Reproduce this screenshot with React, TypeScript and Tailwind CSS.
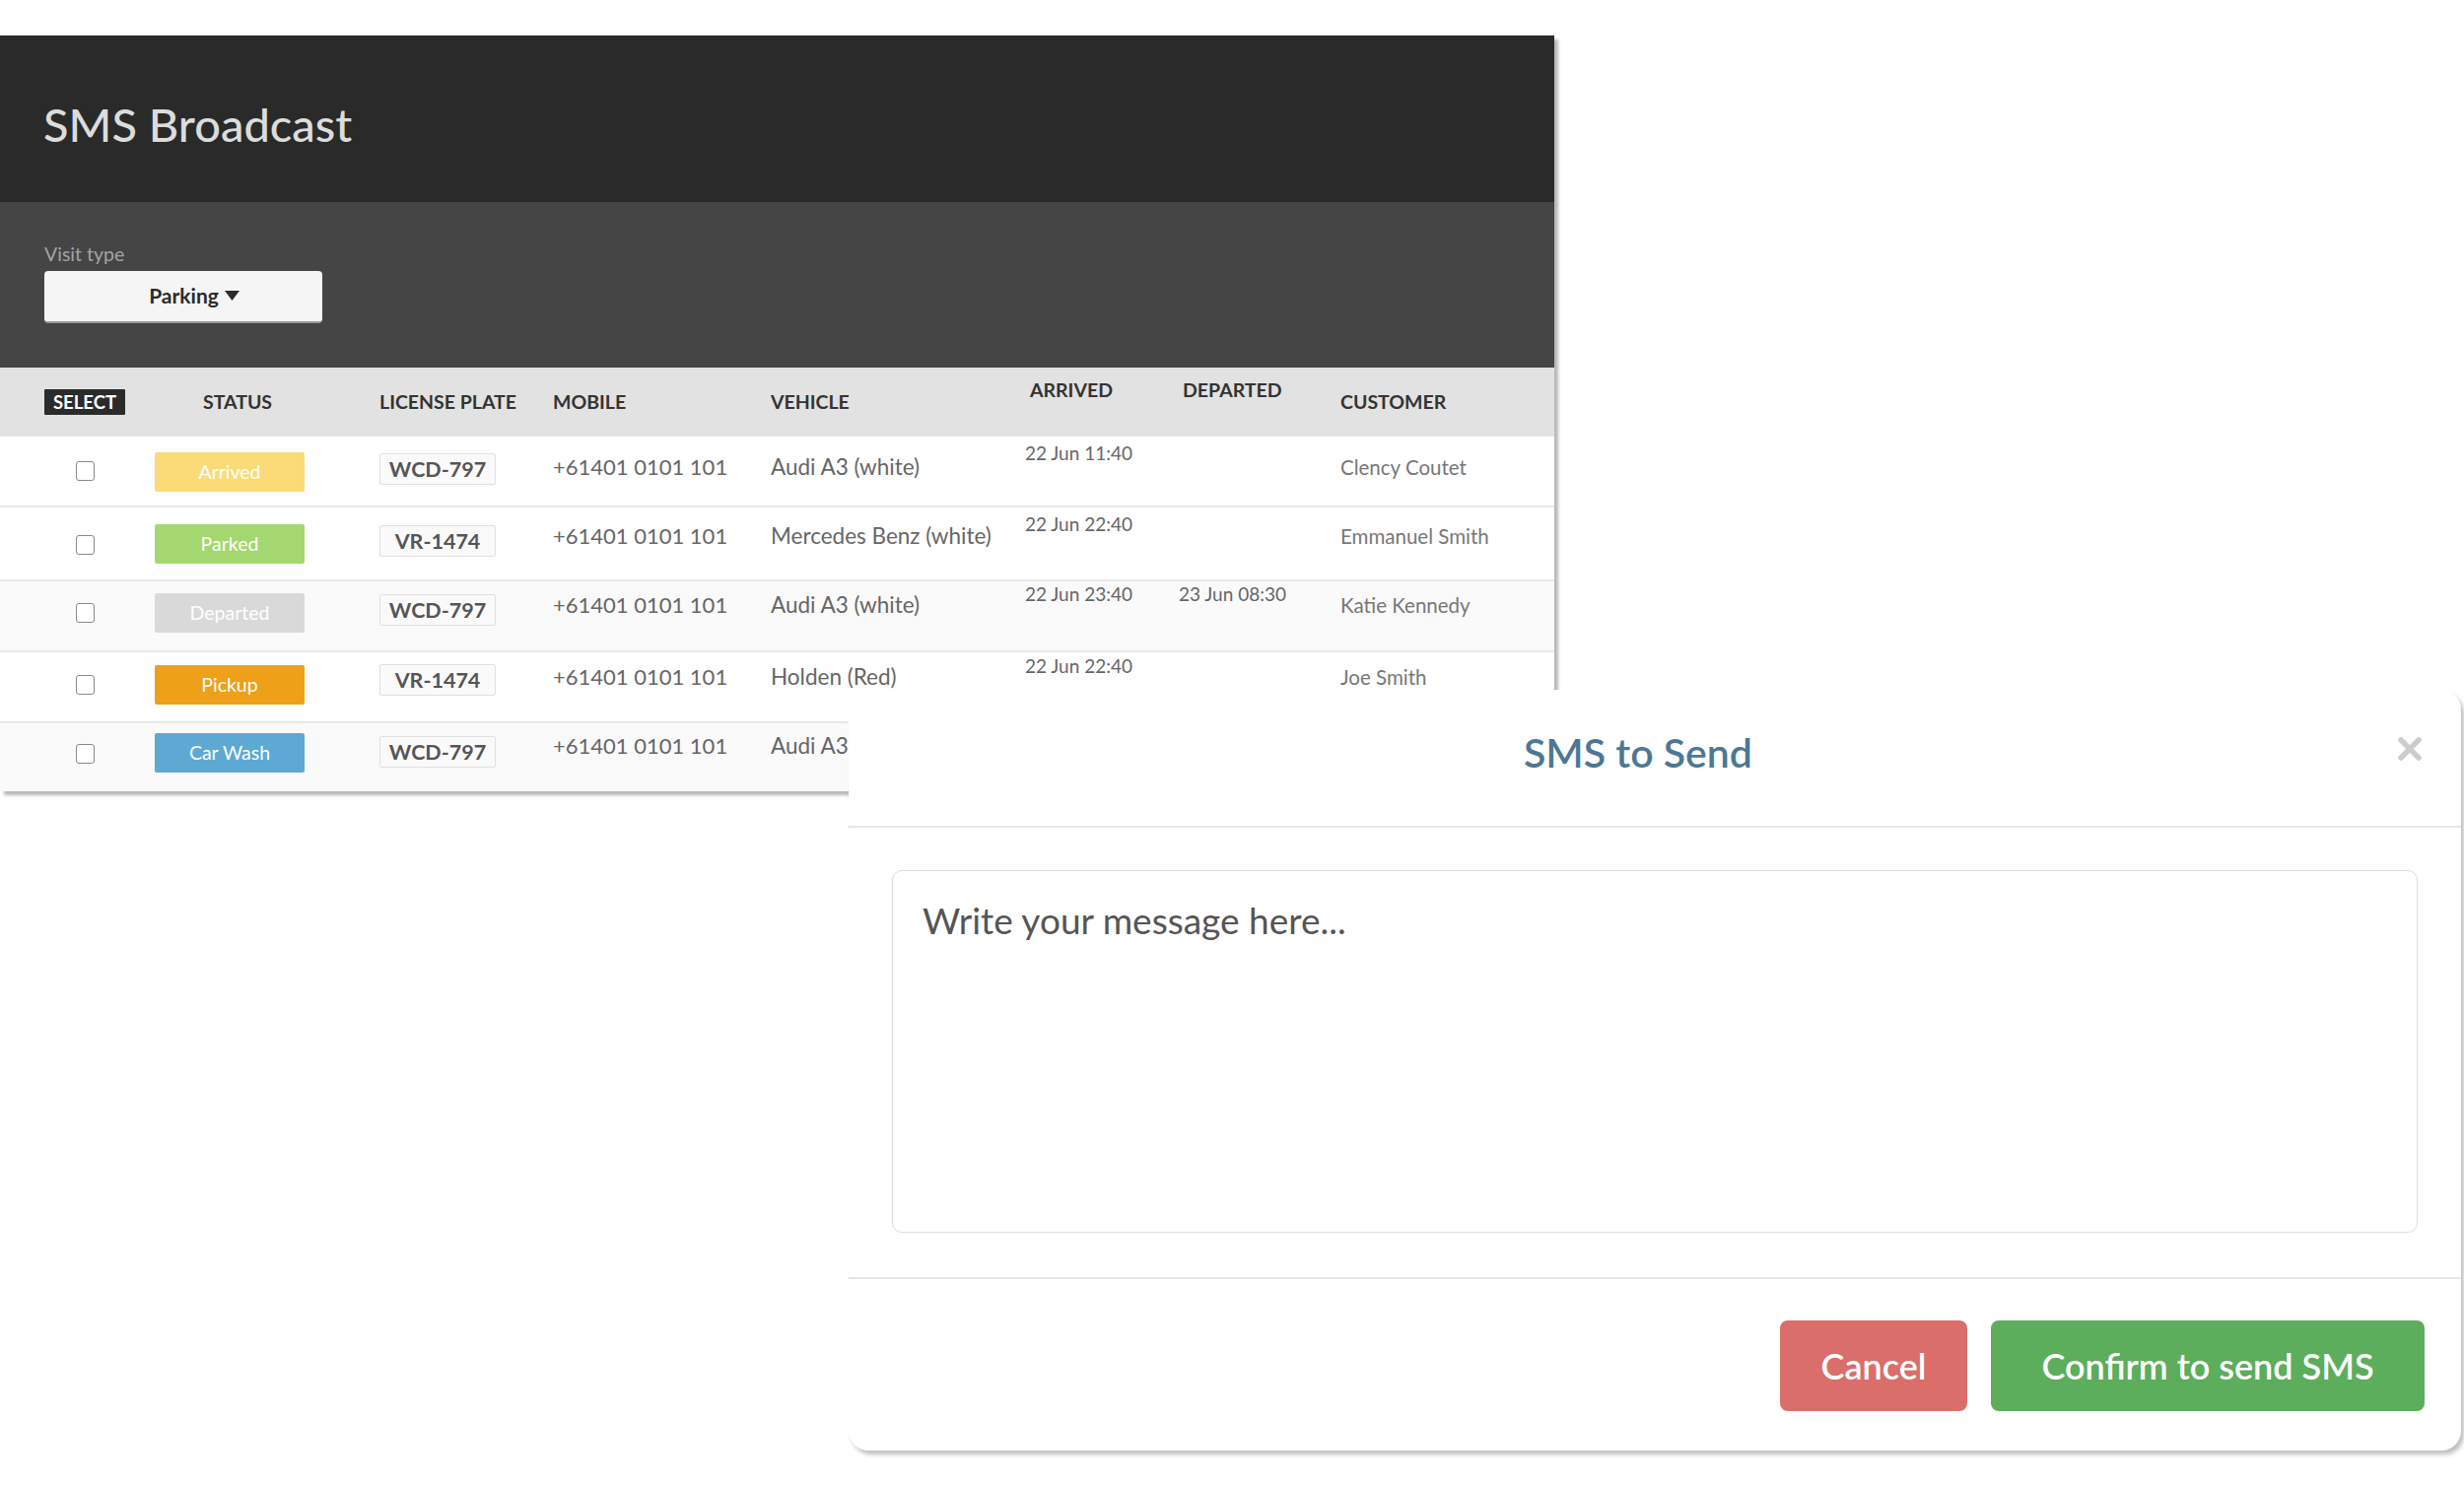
import React from 'react';

type Row = {
  status: string;
  badge: string;
  plate: string;
  mobile: string;
  vehicle: string;
  arrived: string;
  departed: string;
  customer: string;
  height: string;
  bg: string;
  // vertical offsets, hand-tuned per row
  cb: string;
  bd: string;
  pl: string;
  tx: string;
  dt: string;
};

const rows: Row[] = [
  { status: 'Arrived', badge: 'bg-[#fbdb78]', plate: 'WCD-797', mobile: '+61401 0101 101', vehicle: 'Audi A3 (white)', arrived: '22 Jun 11:40', departed: '', customer: 'Clency Coutet', height: 'h-[70px]', bg: 'bg-white', cb: 'pt-[25px]', bd: 'pt-[16px]', pl: 'pt-[17px]', tx: 'pt-[18px]', dt: 'pt-[6px]' },
  { status: 'Parked', badge: 'bg-[#a4d76f]', plate: 'VR-1474', mobile: '+61401 0101 101', vehicle: 'Mercedes Benz (white)', arrived: '22 Jun 22:40', departed: '', customer: 'Emmanuel Smith', height: 'h-[75px]', bg: 'bg-white', cb: 'pt-[28px]', bd: 'pt-[17px]', pl: 'pt-[18px]', tx: 'pt-[16px]', dt: 'pt-[6px]' },
  { status: 'Departed', badge: 'bg-[#d9d9d9]', plate: 'WCD-797', mobile: '+61401 0101 101', vehicle: 'Audi A3 (white)', arrived: '22 Jun 23:40', departed: '23 Jun 08:30', customer: 'Katie Kennedy', height: 'h-[72px]', bg: 'bg-[#fafafa]', cb: 'pt-[22px]', bd: 'pt-[12px]', pl: 'pt-[13px]', tx: 'pt-[11px]', dt: 'pt-[2px]' },
  { status: 'Pickup', badge: 'bg-[#eda018]', plate: 'VR-1474', mobile: '+61401 0101 101', vehicle: 'Holden (Red)', arrived: '22 Jun 22:40', departed: '', customer: 'Joe Smith', height: 'h-[72px]', bg: 'bg-white', cb: 'pt-[23px]', bd: 'pt-[13px]', pl: 'pt-[12px]', tx: 'pt-[12px]', dt: 'pt-[3px]' },
  { status: 'Car Wash', badge: 'bg-[#5da9d3]', plate: 'WCD-797', mobile: '+61401 0101 101', vehicle: 'Audi A3 (white)', arrived: '22 Jun 22:40', departed: '', customer: 'Jane Doe', height: 'h-[71px]', bg: 'bg-[#fafafa]', cb: 'pt-[21px]', bd: 'pt-[10px]', pl: 'pt-[13px]', tx: 'pt-[10px]', dt: 'pt-[2px]' },
];

function CloseIcon() {
  return (
    <svg width="28" height="28" viewBox="0 0 28 28" fill="none">
      <path d="M5 5 L23 23 M23 5 L5 23" stroke="#cccccc" strokeWidth="5.5" strokeLinecap="round" />
    </svg>
  );
}

export default function App() {
  return (
    <div className="relative w-[2500px] h-[1507px] overflow-hidden bg-white pt-[36px] font-[family-name:Lato,sans-serif]">
      {/* Broadcast panel */}
      <div className="w-[1577px] bg-white shadow-[4px_4px_3px_rgba(0,0,0,0.28)]">
        {/* Title bar */}
        <div className="h-[169px] bg-[#2a2a2a] pl-[44px] pt-[62px]">
          <h1 className="text-[47px] leading-[56px] font-medium text-[#dcdcdc]">SMS Broadcast</h1>
        </div>

        {/* Filter */}
        <div className="h-[168px] bg-[#454545] px-[45px] pt-[42px]">
          <div className="text-[19.5px] leading-[21px] text-[#a3a3a3] mb-[7px]">Visit type</div>
          <button className="flex items-center justify-center gap-[6px] w-[282px] h-[53px] pl-[22px] pb-[2px] rounded-[4px] bg-[#f5f5f5] border-b-2 border-[#9a9a9a]">
            <span className="text-[21px] font-bold text-[#2b2b2b]">Parking</span>
            <svg width="15" height="10" viewBox="0 0 15 10">
              <path d="M0 0 H15 L7.5 10 Z" fill="#2b2b2b" />
            </svg>
          </button>
        </div>

        {/* Table header */}
        <div className="flex h-[70px] bg-[#e2e2e2] text-[19.5px] leading-[22px] font-bold text-[#333] uppercase">
          <div className="w-[157px] pl-[45px] flex items-center">
            <span className="w-[82px] h-[26px] flex items-center justify-center bg-[#2b2b2b] text-white text-[18.5px] rounded-[1px]">Select</span>
          </div>
          <div className="w-[228px] pl-[49px] flex items-center">Status</div>
          <div className="w-[176px] flex items-center">License Plate</div>
          <div className="w-[221px] flex items-center">Mobile</div>
          <div className="w-[258px] flex items-center">Vehicle</div>
          <div className="w-[156px] pl-[5px] pt-[12px]">Arrived</div>
          <div className="w-[164px] pl-[4px] pt-[12px]">Departed</div>
          <div className="flex-1 flex items-center">Customer</div>
        </div>

        {/* Table rows */}
        {rows.map((r, i) => (
          <div key={i} className={`flex items-start ${r.height} ${r.bg} ${i > 0 ? 'border-t-2 border-[#e8e8e8]' : ''}`}>
            <div className={`w-[157px] pl-[45px] ${r.cb}`}>
              <div className="w-[82px] flex justify-center">
                <span className="w-[19px] h-[20px] rounded-[3px] border-[1.5px] border-[#8a8a8a] bg-white" />
              </div>
            </div>
            <div className={`w-[228px] ${r.bd}`}>
              <span className={`w-[152px] h-[40px] rounded-[2px] ${r.badge} flex items-center justify-center text-[19.5px] text-white`}>{r.status}</span>
            </div>
            <div className={`w-[176px] ${r.pl}`}>
              <span className="w-[118px] h-[32px] flex items-center justify-center border border-[#e0e0e0] rounded-[2px] bg-[#fafafa] text-[21.5px] font-bold text-[#555]">{r.plate}</span>
            </div>
            <div className={`w-[221px] ${r.tx} text-[22px] leading-[26px] text-[#666]`}>{r.mobile}</div>
            <div className={`w-[258px] ${r.tx} text-[22.5px] leading-[26px] text-[#666] whitespace-nowrap`}>{r.vehicle}</div>
            <div className={`w-[156px] ${r.dt} text-[19px] leading-[22px] text-[#666]`}>{r.arrived}</div>
            <div className={`w-[164px] ${r.dt} text-[19px] leading-[22px] text-[#666]`}>{r.departed}</div>
            <div className={`flex-1 ${r.tx} text-[20.5px] leading-[26px] text-[#777]`}>{r.customer}</div>
          </div>
        ))}
      </div>

      {/* SMS modal */}
      <div className="absolute left-[861px] top-[700px] w-[1636px] h-[772px] flex flex-col bg-white rounded-[20px] shadow-[3px_4px_4px_rgba(0,0,0,0.25)]">
        <div className="relative h-[140px] flex items-center justify-center pb-[10px] border-b-2 border-[#e6e6e6]">
          <h2 className="text-[41px] leading-[48px] font-semibold text-[#4b7895] -ml-[34px]">SMS to Send</h2>
          <button className="absolute right-[38px] top-[46px]">
            <CloseIcon />
          </button>
        </div>
        <div className="px-[44px] pt-[43px] pb-[45px] border-b-2 border-[#e6e6e6]">
          <div className="h-[368px] rounded-[10px] border border-[#dcdcdc] pl-[30px] pt-[28px] text-[37px] leading-[44px] text-[#555]">
            Write your message here...
          </div>
        </div>
        <div className="flex justify-end gap-[24px] pt-[42px] pr-[37px]">
          <button className="w-[190px] h-[92px] rounded-[8px] bg-[#d96e6b] text-white text-[36px] font-semibold">Cancel</button>
          <button className="w-[440px] h-[92px] rounded-[8px] bg-[#5cad5c] text-white text-[36px] font-semibold">Confirm to send SMS</button>
        </div>
      </div>
    </div>
  );
}
